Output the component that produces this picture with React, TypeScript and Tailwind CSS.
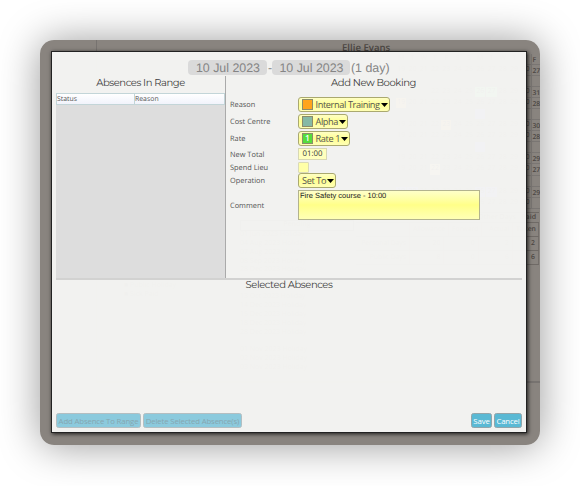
import clsx from "clsx";
import type { ReactNode } from "react";

const dayColumn = [
	"F", "27", "", "31", "28", "", "30", "28", "", "29", "27", "", "29", "",
];

const monthDays = ["19", "20", "21", "22", "23", "24", "25", "26", "27", "28", "29", "30"];

const marked: Record<string, string> = {
	"3-7": "bg-green-300",
	"3-8": "bg-green-300",
	"4-0": "bg-orange-300",
	"5-7": "bg-indigo-400",
	"6-4": "bg-orange-300",
	"8-7": "bg-indigo-400",
	"10-3": "bg-orange-200",
	"12-0": "bg-indigo-400",
	"12-1": "bg-indigo-400",
	"12-7": "bg-indigo-400",
	"12-8": "bg-indigo-400",
};

const bookings = [
	"01 Jun 2023", "04 Aug 2023", "07 Aug 2023", "08 Sep 2023", "28 Dec 2023", "",
	"", "13 Oct 2023", "14 Dec 2023", "15 Dec 2023", "18 Dec 2023", "28 Dec 2023",
	"", "01 Nov 2023", "02 Nov 2023", "03 Nov 2023",
];

const allowances = [
	["", "Allowance", "Forward", "Actual", "Taken"],
	["Personal Days", "20", "0", "2", "2"],
	["Public Days", "8", "0", "6", "6"],
];

function dayLabel(row: number, col: number, day: string) {
	if (row === 0) return "MTWTFSS"[col % 7];
	if (row % 3 === 2 || (row === 3 && col < 3)) return "";
	return day;
}

function StaffPage() {
	return (
		<div
			aria-hidden
			className="absolute inset-0 font-['Open_Sans','Noto_Sans',sans-serif] text-[7px] text-[#4c4743]"
		>
			<div className="absolute left-[56px] top-0 h-[343px] w-[460px] border-b-2 border-l border-[#777370]" />
			<div className="absolute left-[302px] top-[1px] text-[9.6px] leading-[13px] font-semibold">
				Ellie Evans
			</div>
			<div className="absolute left-[356px] top-[14px] flex w-[150px] flex-col">
				{dayColumn.map((last, row) => (
					<div key={row} className="flex h-[11.05px] border-b border-[#7a7673]">
						{monthDays.map((day, col) => (
							<span
								key={day}
								className={clsx(
									"w-[11.3px] shrink-0 border-r border-[#7a7673] text-center leading-[10px]",
									marked[`${row}-${col}`],
								)}
							>
								{dayLabel(row, col, day)}
							</span>
						))}
						<span className="ml-px shrink-0 text-[6.8px] leading-[11px] font-semibold tracking-[-0.3px]">{last}</span>
					</div>
				))}
			</div>
			<div className="absolute left-[200px] top-[180px] w-[114px] leading-[8.9px]">
				<div className="border text-center font-semibold">Pending</div>
				{bookings.map((date, i) => (
					<div key={i} className="h-[8.9px]">
						{date && `${date}  Holiday`}
					</div>
				))}
			</div>
			<div className="absolute left-[316px] top-[172px] w-[183px] border-y border-[#6f6a66]">
				<div className="pr-[3px] text-right leading-[9px] font-semibold">Other Days&nbsp;&nbsp; Paid</div>
				{allowances.map((cells) => (
					<div key={cells[4]} className="flex h-[14px] border-t border-[#6f6a66]">
						{cells.map((cell, i) => (
							<span
								key={i}
								className={clsx(
									"border-r border-[#746f6b] px-[3px] text-right text-[6.8px] leading-[12px] whitespace-nowrap",
									i === 0 ? "w-[54px]" : i === 4 ? "w-[26px] font-semibold" : "flex-1",
								)}
							>
								{cell}
							</span>
						))}
					</div>
				))}
			</div>
			<div className="absolute left-[84px] top-[241px] leading-[9px]">
				<div>■ Public Holiday</div>
				<div>■ Sick Paid</div>
			</div>
		</div>
	);
}

function Select({ children, swatch, mark }: { children: ReactNode; swatch?: string; mark?: string }) {
	return (
		<button className="flex h-[15px] items-center rounded-[3px] border border-[#aaa96f] bg-linear-to-b from-[#ffffc4] via-[#ffff8f] to-[#ffffb5] pr-px pl-[3px] text-[9.2px] leading-none tracking-[-0.38px] whitespace-nowrap text-[#555]">
			{swatch && (
				<span
					className={clsx(
						"mr-[3px] flex size-[10.5px] items-center justify-center border border-[#8c8c6a] text-[8.5px] font-semibold text-white",
						swatch,
					)}
				>
					{mark}
				</span>
			)}
			<span>{children}</span>
			<svg viewBox="0 0 7 4" className="ml-px h-[4px] w-[7px] fill-black">
				<path d="M0 0h7L3.5 4z" />
			</svg>
		</button>
	);
}

function Row({ label, className, children }: { label: string; className: string; children: ReactNode }) {
	return (
		<div className={clsx("flex items-center", className)}>
			<label className="w-[68px] shrink-0 pt-[3px] text-[7.4px] leading-none text-[#555]">{label}</label>
			{children}
		</div>
	);
}

function Button({ children, className, disabled }: { children: ReactNode; className: string; disabled?: boolean }) {
	return (
		<button
			disabled={disabled}
			className={clsx(
				"h-[15px] rounded-[2.5px] border text-center leading-[14px] tracking-[-0.15px] whitespace-nowrap",
				disabled ? "border-[#b4bec1] bg-[#8bcadd] text-[#86a6b0]" : "border-[#93a5aa] bg-[#5ab9d4] font-medium text-white",
				className,
			)}
		>
			{children}
		</button>
	);
}

function Heading({ children, className }: { children: ReactNode; className?: string }) {
	return (
		<h2
			className={clsx(
				"text-center font-['Montserrat','Inter',sans-serif] text-[10px] leading-[14px] font-normal tracking-[-0.42px] text-[#3c3c3c]",
				className,
			)}
		>
			{children}
		</h2>
	);
}

export default function App() {
	return (
		<div className="h-[486px] w-[580px] overflow-hidden bg-white p-[40px] [text-rendering:geometricPrecision]">
			<div className="relative h-[405px] w-[500px] rounded-[14px] shadow-[0_1px_40px_rgba(0,0,0,0.4)]">
				<div className="absolute inset-0 overflow-hidden rounded-[14px] bg-[#89847f]">
					<StaffPage />
				</div>
				<div className="relative top-[11px] left-[11px] flex h-[382px] w-[476px] flex-col border border-[#222] bg-[#f6f6f4]/97 px-[4px] font-['Open_Sans','Noto_Sans',sans-serif] shadow-[1px_1px_4px_rgba(0,0,0,0.8)]">
					<div className="mt-[8px] flex h-[15px] items-center justify-center font-['Liberation_Sans',Arial,sans-serif] text-[12.4px] leading-[16px] whitespace-nowrap text-[#858585]">
						<span className="h-[15px] w-[79px] rounded-[4px] bg-[#dadada] text-center">10 Jul 2023</span>
						<span className="w-[5px] text-center">-</span>
						<span className="h-[15px] w-[78px] rounded-[4px] bg-[#dadada] text-center">10 Jul 2023</span>
						<span className="pl-[0.5px]">(1 day)</span>
					</div>
					<div className="mt-px flex h-[204px] border-b-2 border-[#d2d2d1]">
						<section className="flex w-[170px] flex-col border-r border-[#aaa]">
							<Heading>Absences In Range</Heading>
							<div className="mt-[3px] flex h-[12px] border border-[#c3d5d8] bg-linear-to-b from-white to-[#f1f3fb] text-[6.9px] leading-[11px] text-[#555]">
								<span className="w-[78px] border-r border-[#c3d5d8]">Status</span>
								<span>Reason</span>
							</div>
							<div className="flex-1 bg-[#dddddd]" />
						</section>
						<section className="flex-1 pl-[4px]">
							<Heading className="pr-[5px]">Add New Booking</Heading>
							<Row label="Reason" className="mt-[7px] h-[15px]">
								<Select swatch="bg-[#ffa41c]">Internal Training</Select>
							</Row>
							<Row label="Cost Centre" className="mt-[2px] h-[15px]">
								<Select swatch="bg-[#86b9a5]">Alpha</Select>
							</Row>
							<Row label="Rate" className="mt-[2px] h-[15px]">
								<Select swatch="bg-[#55dc3d]" mark="1">Rate 1</Select>
							</Row>
							<Row label="New Total" className="mt-[2px] h-[12px]">
								<span className="h-[12px] w-[29px] border border-[#d8d8b4] bg-[#ffffbe] text-center text-[7.8px] leading-[11px] text-[#333]">
									01:00
								</span>
							</Row>
							<Row label="Spend Lieu" className="mt-[2px] h-[11px]">
								<span className="size-[11px] rounded-[1px] border border-[#dadab8] bg-[#ffffa8]" />
							</Row>
							<Row label="Operation" className="h-[15px]">
								<Select>Set To</Select>
							</Row>
							<Row label="Comment" className="mt-[2px] h-[30px]">
								<span className="h-[30px] w-[182px] border border-[#b3b38e] bg-linear-to-b from-[#ffffc8] via-[#ffff88] to-[#ffffb5] px-px font-['Liberation_Sans',Arial,sans-serif] text-[7.5px] leading-[10px] text-[#222]">
									Fire Safety course - 10:00
								</span>
							</Row>
						</section>
					</div>
					<Heading className="mt-[-2px]">Selected Absences</Heading>
					<div className="mt-auto mb-[4px] flex gap-[2px] text-[7.8px]">
						<Button disabled className="w-[85px]">Add Absence To Range</Button>
						<Button disabled className="w-[99px]">Delete Selected Absence(s)</Button>
						<Button className="ml-auto w-[21px]">Save</Button>
						<Button className="w-[28px]">Cancel</Button>
					</div>
				</div>
			</div>
		</div>
	);
}
